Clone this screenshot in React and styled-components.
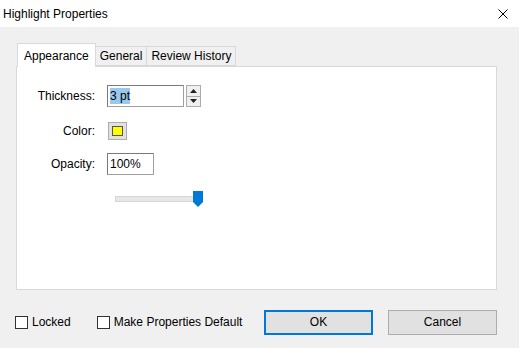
import React from 'react';
import styled, { createGlobalStyle } from 'styled-components';

const Global = createGlobalStyle`
  html, body { margin: 0; padding: 0; background: #ffffff; }
  body { font-family: "Liberation Sans", Arial, sans-serif; font-size: 12px; color: #000; }
`;

const Window = styled.div`
  width: 528px;
  height: 357px;
  background: #ffffff;
  display: flex;
  flex-direction: column;
  overflow: hidden;
`;

const TitleBar = styled.div`
  height: 27px;
  display: flex;
  align-items: center;
  justify-content: space-between;
  padding: 0 20px 0 3px;
  font-size: 12px;
`;

const Body = styled.div`
  width: 519px;
  height: 321px;
  background: #f0f0f0;
  display: flex;
  flex-direction: column;
  padding: 16px 0 0 16px;
  box-sizing: border-box;
`;

const Tabs = styled.div`
  display: flex;
  align-items: flex-end;
  padding-left: 1px;
  height: 23px;
  position: relative;
  z-index: 1;
`;

const Tab = styled.div`
  height: ${p => (p.$active ? '24px' : '20px')};
  margin-bottom: ${p => (p.$active ? '-1px' : '0')};
  padding: 0 ${p => (p.$active ? '6px' : '4px')};
  background: ${p => (p.$active ? '#ffffff' : '#f0f0f0')};
  border: 1px solid #d9d9d9;
  border-bottom: ${p => (p.$active ? 'none' : '1px solid #d9d9d9')};
  border-left: ${p => (p.$active ? '1px solid #d9d9d9' : 'none')};
  display: flex;
  align-items: center;
  box-sizing: border-box;
  white-space: nowrap;
`;

const Panel = styled.div`
  width: 481px;
  height: 224px;
  background: #ffffff;
  border: 1px solid #d9d9d9;
  box-sizing: border-box;
  padding-top: 18px;
`;

const Form = styled.div`
  display: grid;
  grid-template-columns: 78px auto;
  column-gap: 12px;
  align-items: center;
  justify-content: start;
`;

const Label = styled.div`
  text-align: right;
  height: ${p => p.$h}px;
  margin-bottom: ${p => p.$mb}px;
  line-height: ${p => p.$h}px;
`;

const Cell = styled.div`
  display: flex;
  align-items: center;
  gap: 2px;
  height: ${p => p.$h}px;
  margin-bottom: ${p => p.$mb}px;
`;

const TextBox = styled.div`
  width: ${p => p.$w}px;
  height: 22px;
  box-sizing: border-box;
  border: 1px solid #a0a0a0;
  border-top-color: #7a7a7a;
  border-left-color: #7a7a7a;
  background: #fff;
  padding: 2px 2px;
  display: flex;
  align-items: center;
`;

const Selected = styled.span`
  background: #99c9ef;
  padding: 1px 0;
`;

const Spinner = styled.div`
  display: flex;
  flex-direction: column;
  width: 15px;
  height: 22px;
`;

const SpinBtn = styled.div`
  flex: 1;
  background: #f0f0f0;
  border: 1px solid #adadad;
  display: flex;
  align-items: center;
  justify-content: center;
  &:first-child { border-bottom: none; }
`;

const Swatch = styled.div`
  width: 19px;
  height: 18px;
  box-sizing: border-box;
  border: 1px solid #adadad;
  background: #e1e1e1;
  padding: 3px;
  margin-left: 1px;
  & > div { width: 100%; height: 100%; background: #ffff00; border: 1px solid #555; box-sizing: border-box; }
`;

const SliderRow = styled.div`
  margin-left: 98px;
  width: 88px;
  height: 16px;
  display: flex;
  align-items: center;
  position: relative;
`;

const Track = styled.div`
  flex: 1;
  height: 4px;
  background: #e7e7e7;
  border: 1px solid #d6d6d6;
`;

const Thumb = styled.svg`
  position: absolute;
  left: 78px;
  top: 0;
`;

const Footer = styled.div`
  display: flex;
  align-items: center;
  height: 26px;
  margin-top: 19px;
  margin-left: -1px;
  padding-right: 22px;
`;

const Check = styled.label`
  display: flex;
  align-items: center;
  gap: 4px;
  margin-right: ${p => p.$mr}px;
  & > span {
    width: 13px;
    height: 13px;
    box-sizing: border-box;
    border: 1px solid #333;
    background: #fff;
  }
`;

const Buttons = styled.div`
  margin-left: auto;
  display: flex;
  gap: 15px;
`;

const Button = styled.div`
  width: 109px;
  height: 25px;
  box-sizing: border-box;
  background: #e1e1e1;
  border: ${p => (p.$default ? '2px solid #0078d7' : '1px solid #adadad')};
  display: flex;
  align-items: center;
  justify-content: center;
`;

export default function App() {
  return (
    <Window>
      <Global />
      <TitleBar>
        <span>Highlight Properties</span>
        <svg width="10" height="10" viewBox="0 0 10 10">
          <path d="M0.5 0.5 L9.5 9.5 M9.5 0.5 L0.5 9.5" stroke="#000" strokeWidth="1" />
        </svg>
      </TitleBar>
      <Body>
        <Tabs>
          <Tab $active>Appearance</Tab>
          <Tab>General</Tab>
          <Tab>Review History</Tab>
        </Tabs>
        <Panel>
          <Form>
            <Label $h={22} $mb={15}>Thickness:</Label>
            <Cell $h={22} $mb={15}>
              <TextBox $w={77}><Selected>3 pt</Selected></TextBox>
              <Spinner>
                <SpinBtn>
                  <svg width="7" height="4" viewBox="0 0 7 4"><path d="M0 4 L3.5 0 L7 4 Z" fill="#222" /></svg>
                </SpinBtn>
                <SpinBtn>
                  <svg width="7" height="4" viewBox="0 0 7 4"><path d="M0 0 L3.5 4 L7 0 Z" fill="#222" /></svg>
                </SpinBtn>
              </Spinner>
            </Cell>
            <Label $h={18} $mb={13}>Color:</Label>
            <Cell $h={18} $mb={13}>
              <Swatch><div /></Swatch>
            </Cell>
            <Label $h={22} $mb={16}>Opacity:</Label>
            <Cell $h={22} $mb={16}>
              <TextBox $w={47}>100%</TextBox>
            </Cell>
          </Form>
          <SliderRow>
            <Track />
            <Thumb width="10" height="16" viewBox="0 0 10 16">
              <path d="M0 0 H10 V11 L5 16 L0 11 Z" fill="#0078d7" />
            </Thumb>
          </SliderRow>
        </Panel>
        <Footer>
          <Check $mr={26}><span />Locked</Check>
          <Check $mr={0}><span />Make Properties Default</Check>
          <Buttons>
            <Button $default>OK</Button>
            <Button>Cancel</Button>
          </Buttons>
        </Footer>
      </Body>
    </Window>
  );
}
